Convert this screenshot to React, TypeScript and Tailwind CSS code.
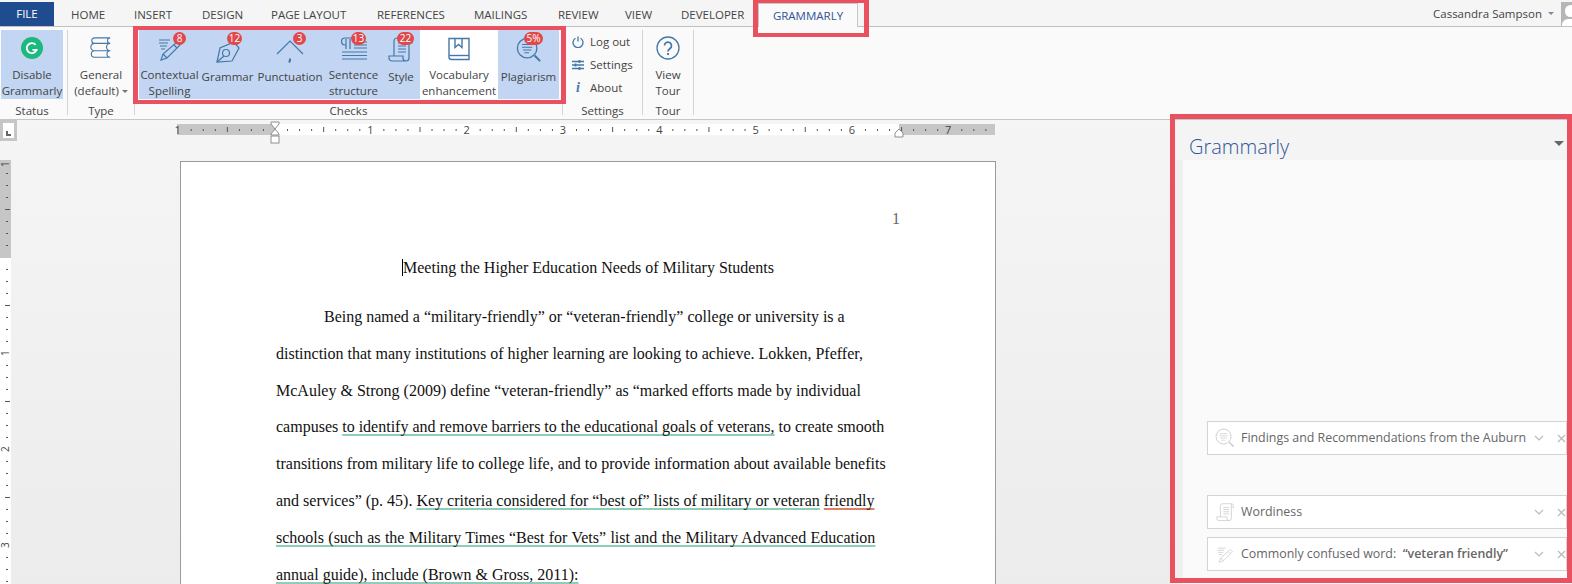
import type { ReactNode } from "react";

const tabs = [
  { label: "HOME", width: "w-[63px]" },
  { label: "INSERT", width: "w-[68px]" },
  { label: "DESIGN", width: "w-[69px]" },
  { label: "PAGE LAYOUT", width: "w-[106px]" },
  { label: "REFERENCES", width: "w-[97px]" },
  { label: "MAILINGS", width: "w-[84px]" },
  { label: "REVIEW", width: "w-[67px]" },
  { label: "VIEW", width: "w-[56px]" },
  { label: "DEVELOPER", width: "w-[77px]" },
];

const Blue = ({ children, w = 30, h = 28 }: { children: ReactNode; w?: number; h?: number }) => (
  <svg
    width={w}
    height={h}
    viewBox={`0 0 ${w} ${h}`}
    fill="none"
    stroke="#4478a8"
    strokeWidth="1.2"
  >
    {children}
  </svg>
);

const PencilIcon = ({ stroke = "#4478a8", size = 24 }: { stroke?: string; size?: number }) => (
  <svg width={size} height={size} viewBox="0 0 24 24" fill="none" stroke={stroke} strokeWidth="1.2">
    <path d="M1 3h11M1 6h9M2 9h7M3 12h4" />
    <path d="M19 5l3 3L9 21l-6 2 2-6z" />
    <path d="M5 17l4 4M16 8l3 3" />
  </svg>
);

const NibIcon = () => (
  <Blue w={28} h={24}>
    <path d="M3 23l3-14 14-6 5 6-7 13z" />
    <path d="M3 23l7-6" />
    <circle cx="12" cy="14" r="3.5" />
  </Blue>
);

const CaretIcon = () => (
  <Blue w={28} h={24}>
    <path d="M1 15L14 2l13 13" />
    <path d="M14 19.5v2l-1 2" strokeWidth="2" />
  </Blue>
);

const SentenceIcon = () => (
  <Blue w={28} h={24}>
    <path d="M6 2v10M10 2v10M12 1H5a3.5 3.5 0 0 0 0 7h1" />
    <path d="M14 5h13M14 8h13M14 11h13M2 15h25M2 18.500h25M2 22h25" />
  </Blue>
);

const ScrollIcon = ({ stroke = "#4478a8", size = 26 }: { stroke?: string; size?: number }) => (
  <svg width={size} height={size} viewBox="0 0 26 26" fill="none" stroke={stroke} strokeWidth="1.2">
    <path d="M21 1H9a3 3 0 0 0-3 3v15" />
    <path d="M21 1a3 3 0 0 1 3 3v2h-3M21 1v20a3 3 0 0 1-3 3H4a3 3 0 0 1-3-3v-2h14v2a3 3 0 0 0 3 3" />
    <path d="M10 6h8M10 9h8M10 12h8M10 15h8" />
  </svg>
);

const BookIcon = () => (
  <Blue w={24} h={24}>
    <path d="M2 1.5h20v21H4.500A2.500 2.500 0 0 1 2 20z" strokeWidth="1.4" />
    <path d="M2 18.500h20" strokeWidth="1.4" />
    <path d="M8 1.500v9l3.500-3 3.500 3v-9" strokeWidth="1.4" />
  </Blue>
);

const SearchIcon = ({ stroke = "#4478a8", size = 26 }: { stroke?: string; size?: number }) => (
  <svg width={size} height={size} viewBox="0 0 28 28" fill="none" stroke={stroke} strokeWidth="1.4">
    <circle cx="12" cy="12" r="10.500" />
    <path d="M6.500 8h11M6.500 11h11M7.500 14h9M9 17h5" strokeWidth="1.100" />
    <path d="M20 20l6 6" strokeWidth="2.200" />
  </svg>
);

const checks = [
  { top: "Contextual", bottom: "Spelling", width: "w-[61px]", icon: <PencilIcon />, badge: "8", badgeClass: "w-[13px] left-[34px]", on: true },
  { top: "Grammar", bottom: "", width: "w-[55px]", icon: <NibIcon />, badge: "12", badgeClass: "w-[15px] left-[27px]", on: true },
  { top: "Punctuation", bottom: "", width: "w-[70px]", icon: <CaretIcon />, badge: "3", badgeClass: "w-[13px] left-[38px]", on: true },
  { top: "Sentence", bottom: "structure", width: "w-[57px]", icon: <SentenceIcon />, badge: "13", badgeClass: "w-[15px] left-[26px]", on: true },
  { top: "Style", bottom: "", width: "w-[38px]", icon: <ScrollIcon />, badge: "22", badgeClass: "w-[17px] left-[15px]", on: true },
  { top: "Vocabulary", bottom: "enhancement", width: "w-[78px]", icon: <BookIcon />, badge: "", badgeClass: "", on: false },
  { top: "Plagiarism", bottom: "", width: "w-[61px]", icon: <SearchIcon />, badge: "5%", badgeClass: "w-[19px] left-[26px]", on: true },
];

function CheckButton({ check }: { check: (typeof checks)[number] }) {
  return (
    <div className={`${check.width} h-[69px] flex flex-col items-center ${check.on ? "bg-[#c2d5f2]" : "bg-white"}`}>
      <div className="relative w-full h-[37px] pb-[4px] flex items-end justify-center">
        {check.icon}
        {check.badge && (
          <span
            className={`absolute top-[2px] h-[13px] rounded-full bg-[#e0484a] text-white text-[10px] leading-[13px] text-center ${check.badgeClass}`}
          >
            {check.badge}
          </span>
        )}
      </div>
      <div className="mt-[2px] text-center whitespace-nowrap leading-[16px]">
        <div>{check.top}</div>
        <div>{check.bottom}</div>
      </div>
    </div>
  );
}

const GroupLabel = ({ children }: { children: ReactNode }) => (
  <div className="mt-[4px] h-[16px] leading-[16px] text-center">{children}</div>
);

const Sep = () => <div className="w-px h-[85px] bg-[#d4d4d4] shrink-0" />;

function Ribbon() {
  return (
    <div className="h-[93px] bg-[#fafafa] border-b border-[#c6c6c6] pt-[3px] flex text-[#444] shrink-0">
      <div className="w-[67px] pl-px pr-[4px]">
        <div className="h-[69px] bg-[#c2d5f2] flex flex-col items-center">
          <div className="h-[37px] pb-[6px] flex items-end justify-center">
            <svg width="22" height="22" viewBox="0 0 24 24">
              <circle cx="12" cy="12" r="12" fill="#1cb87e" />
              <path d="M16 8.500A5.500 5.500 0 1 0 17 14h-4.500" fill="none" stroke="#fff" strokeWidth="2" />
            </svg>
          </div>
          <div className="mt-[2px] text-center leading-[16px] whitespace-nowrap">
            <div>Disable</div>
            <div>Grammarly</div>
          </div>
        </div>
        <GroupLabel>Status</GroupLabel>
      </div>
      <Sep />
      <div className="w-[66px]">
        <div className="h-[69px] flex flex-col items-center">
          <div className="h-[37px] pb-[5px] flex items-end justify-center">
            <svg width="24" height="24" viewBox="0 0 24 26" fill="none" stroke="#4478a8" strokeWidth="1.2">
              <path d="M22 2H5a3 3 0 0 0 0 6h17a3 3 0 0 1 0-6M2 8h17M22 8H5a3 3 0 0 0 0 8h17M22 16a4 4 0 0 1 0-8M22 16H5a3 3 0 0 0 0 7h17a3 3 0 0 1 0-7" />
            </svg>
          </div>
          <div className="mt-[2px] text-center leading-[16px] whitespace-nowrap">
            <div>General</div>
            <div className="flex items-center">
              (default)
              <span className="ml-[3px] border-x-[3px] border-t-[3px] border-x-transparent border-t-[#777]" />
            </div>
          </div>
        </div>
        <GroupLabel>Type</GroupLabel>
      </div>
      <Sep />
      <div className="w-[427px]">
        <div className="flex pl-[4px]">
          {checks.map((check) => (
            <CheckButton key={check.top} check={check} />
          ))}
        </div>
        <GroupLabel>Checks</GroupLabel>
      </div>
      <Sep />
      <div className="w-[79px]">
        <div className="h-[69px] pl-[9px] pt-[1px] flex flex-col justify-center gap-[7px]">
          <div className="flex items-center h-[16px] leading-[16px]">
            <svg width="12" height="12" viewBox="0 0 12 12" fill="none" stroke="#4478a8" strokeWidth="1.300">
              <path d="M3.500 2.200a5 5 0 1 0 5 0M6 .5v5" />
            </svg>
            <span className="ml-[6px]">Log out</span>
          </div>
          <div className="flex items-center h-[16px] leading-[16px]">
            <svg width="12" height="12" viewBox="0 0 12 12" fill="none" stroke="#4478a8" strokeWidth="1.300">
              <path d="M0 2.500h12M0 6h12M0 9.500h12" />
              <path d="M7.500 1v3M3.500 4.500v3M7.500 8v3" strokeWidth="1.800" />
            </svg>
            <span className="ml-[6px]">Settings</span>
          </div>
          <div className="flex items-center h-[16px] leading-[16px]">
            <span className="w-[12px] text-center font-['Liberation_Serif',serif] italic font-bold text-[#4478a8] text-[14px]">i</span>
            <span className="ml-[6px]">About</span>
          </div>
        </div>
        <GroupLabel>Settings</GroupLabel>
      </div>
      <Sep />
      <div className="w-[50px]">
        <div className="h-[69px] flex flex-col items-center">
          <div className="h-[37px] pb-[5px] flex items-end justify-center">
            <svg width="24" height="24" viewBox="0 0 24 24" fill="none" stroke="#4478a8" strokeWidth="1.300">
              <circle cx="12" cy="12" r="11" />
              <path d="M8.500 9.500a3.500 3.500 0 1 1 5.500 3c-1.400 1-2 1.500-2 3" strokeWidth="1.700" />
              <path d="M12 17v2" strokeWidth="1.900" />
            </svg>
          </div>
          <div className="mt-[2px] text-center leading-[16px]">
            <div>View</div>
            <div>Tour</div>
          </div>
        </div>
        <GroupLabel>Tour</GroupLabel>
      </div>
      <Sep />
    </div>
  );
}

function HorizontalRuler() {
  const ticks = [];
  for (let i = -8; i <= 59; i++) {
    const x = 98 + i * 12.04;
    if (i % 8 === 0) {
      const n = Math.abs(i / 8);
      if (n > 0) {
        ticks.push(
          <text key={i} x={x - 1} y="10" fontSize="11" textAnchor="middle" fill="#444" fontFamily="Open Sans">
            {n}
          </text>,
        );
      }
    } else if (i % 4 === 0) {
      ticks.push(<rect key={i} x={x} y="3" width="1" height="5" fill="#555" />);
    } else {
      ticks.push(<rect key={i} x={x} y="5" width="1" height="2" fill="#555" />);
    }
  }
  return (
    <svg width="818" height="24" viewBox="0 0 818 24" className="shrink-0 overflow-visible">
      <rect x="0" y="0" width="818" height="11" fill="#fff" />
      <rect x="0" y="0" width="98" height="11" fill="#c6c6c6" />
      <rect x="722" y="0" width="96" height="11" fill="#c6c6c6" />
      {ticks}
      <path d="M94 -2h8v2l-4 5-4-5z M98 5l4 5v1h-8v-1z" fill="#fff" stroke="#8e8e8e" />
      <rect x="94" y="12" width="8" height="7" fill="#fff" stroke="#8e8e8e" />
      <path d="M722 5l4 4v4h-8v-4z" fill="#fff" stroke="#8e8e8e" />
    </svg>
  );
}

function VerticalRuler() {
  const ticks = [];
  for (let i = 0; i <= 36; i++) {
    const y = 1 + i * 12;
    if (i % 8 === 0) {
      ticks.push(
        <text key={i} x="0" y="0" transform={`translate(9 ${i === 0 ? 7 : y + 3}) rotate(-90)`} fontSize="10" fill="#444" fontFamily="Open Sans">
          {i === 0 ? 1 : i / 8 - 1 === 0 ? "" : i / 8 - 1}
        </text>,
      );
    } else if (i % 4 === 0) {
      ticks.push(<rect key={i} x="5" y={y} width="5" height="1" fill="#555" />);
    } else {
      ticks.push(<rect key={i} x="6" y={y} width="2" height="1" fill="#555" />);
    }
  }
  return (
    <svg width="12" height="425" viewBox="0 0 12 425" className="shrink-0">
      <rect x="0" y="0" width="11" height="425" fill="#fff" />
      <rect x="0" y="0" width="11" height="98" fill="#c6c6c6" />
      {ticks}
    </svg>
  );
}

const Teal = ({ children }: { children: ReactNode }) => (
  <span className="underline decoration-[#8fcdbb] decoration-2 underline-offset-[2px] [text-decoration-skip-ink:none]">{children}</span>
);

const Rust = ({ children }: { children: ReactNode }) => (
  <span className="underline decoration-[#df7f68] decoration-2 underline-offset-[2px] [text-decoration-skip-ink:none]">{children}</span>
);

const DocLine = ({ children, className = "" }: { children: ReactNode; className?: string }) => (
  <div className={`h-[36.860px] leading-[36.860px] whitespace-nowrap ${className}`}>{children}</div>
);

function Page() {
  return (
    <div className="w-[816px] h-[424px] bg-white border border-[#9b9b9b] border-b-0 pl-[95px] pt-[39px] font-['Liberation_Serif',serif] text-[16px] text-[#111] shrink-0">
      <div className="h-[30px] leading-[36px] pl-[616px] text-[#666]">1</div>
      <DocLine className="pl-[126px] mt-[19px]">
        <span className="border-l border-black">Meeting the Higher Education Needs of Military Students</span>
      </DocLine>
      <DocLine className="pl-[48px] mt-[12px]">
        Being named a “military-friendly” or “veteran-friendly” college or university is a
      </DocLine>
      <DocLine>distinction that many institutions of higher learning are looking to achieve. Lokken, Pfeffer,</DocLine>
      <DocLine>McAuley &amp; Strong (2009) define “veteran-friendly” as “marked efforts made by individual</DocLine>
      <DocLine>
        campuses <Teal>to identify and remove barriers to the educational goals of veterans,</Teal> to create smooth
      </DocLine>
      <DocLine>transitions from military life to college life, and to provide information about available benefits</DocLine>
      <DocLine>
        and services” (p. 45). <Teal>Key criteria considered for “best of” lists of military or veteran</Teal>{" "}
        <Rust>friendly</Rust>
      </DocLine>
      <DocLine className="[word-spacing:0.300px]">
        <Teal>schools (such as the Military Times “Best for Vets” list and the Military Advanced Education</Teal>
      </DocLine>
      <DocLine>
        <Teal>annual guide), include (Brown &amp; Gross, 2011):</Teal>
      </DocLine>
    </div>
  );
}

function Finding({ icon, children, className = "" }: { icon: ReactNode; children: ReactNode; className?: string }) {
  return (
    <div className={`h-[34px] ml-[24px] w-[360px] bg-white border border-[#d4d4d4] flex items-center text-[#666] text-[12.400px] ${className}`}>
      <div className="w-[33px] flex justify-center pl-px shrink-0">{icon}</div>
      <div className="w-[293px] whitespace-nowrap overflow-hidden">{children}</div>
      <svg width="10" height="6" viewBox="0 0 10 6" fill="none" stroke="#bbb" strokeWidth="1.200" className="shrink-0">
        <path d="M1 1l4 4 4-4" />
      </svg>
      <svg width="9" height="9" viewBox="0 0 9 9" fill="none" stroke="#bbb" strokeWidth="1.300" className="shrink-0 ml-[13px]">
        <path d="M1 1l7 7M8 1L1 8" />
      </svg>
    </div>
  );
}

function SidePane() {
  return (
    <div className="w-[396px] h-[464px] ml-[6px] bg-[#f0f0f0] shrink-0 overflow-hidden">
      <div className="h-[40px] bg-[#f4f4f4] pl-[13px] pr-[8px] flex items-center justify-between">
        <span className="text-[20px] font-light leading-[26px] mt-[13px] text-[#2f5597]">Grammarly</span>
        <span className="mt-[6px] border-x-[5px] border-t-[5px] border-x-transparent border-t-[#666]" />
      </div>
      <div className="h-[424px] ml-[7px] bg-[#fafafa] pt-[261px]">
        <Finding icon={<SearchIcon stroke="#d0d0d0" size={20} />}>Findings and Recommendations from the Auburn</Finding>
        <Finding icon={<ScrollIcon stroke="#d0d0d0" size={19} />} className="mt-[40px]">Wordiness</Finding>
        <Finding icon={<PencilIcon stroke="#d0d0d0" size={17} />} className="mt-[8px]">
          Commonly confused word:&nbsp; <span className="font-semibold">“veteran friendly”</span>
        </Finding>
      </div>
    </div>
  );
}

export default function App() {
  return (
    <div className="relative w-[1572px] h-[584px] overflow-hidden flex flex-col bg-[#f3f3f3] font-['Open_Sans',sans-serif] text-[11.500px]">
      <div className="h-[27px] bg-[#f5f5f5] border-b border-[#c0c0c0] flex text-[#444] shrink-0">
        <div className="w-[54px] h-[24px] mt-[2px] bg-[#1f4c8f] text-white flex items-center justify-center">FILE</div>
        <div className="w-[17px]" />
        {tabs.map((tab) => (
          <div key={tab.label} className={`${tab.width} h-[26px] leading-[30px] whitespace-nowrap`}>
            {tab.label}
          </div>
        ))}
        <div className="w-[100px] h-[24px] mt-[3px] bg-[#fafafa] border-x border-t border-[#c8c8c8] text-[#2f5597] flex items-center justify-center">
          GRAMMARLY
        </div>
        <div className="ml-auto flex">
          <span className="leading-[28px]">Cassandra Sampson</span>
          <span className="ml-[6px] mt-[12px] h-0 border-x-[3px] border-t-[3px] border-x-transparent border-t-[#888]" />
          <div className="relative ml-[7px] mt-[2px] w-[11px] h-[24px] bg-[#b6b6b6] overflow-hidden">
            <div className="absolute left-[4px] top-[3px] w-[11px] h-[12px] rounded-full bg-white" />
            <div className="absolute left-[1px] top-[17px] w-[16px] h-[12px] rounded-full bg-white" />
          </div>
        </div>
      </div>
      <Ribbon />
      <div className="flex flex-1 min-h-0">
        <div className="w-[1170px] shrink-0 bg-gradient-to-b from-[#f5f5f5] to-[#ececec]">
          <div className="h-[40px] flex pt-[4px] relative">
            <div className="w-[17px] h-[21px] -mt-[4px] border-[3px] border-[#c6c6c6] bg-white flex items-end justify-center pb-[2px] shrink-0">
              <div className="w-[5px] h-[5px] border-l-2 border-b-2 border-[#666]" />
            </div>
            <div className="ml-[160px]">
              <HorizontalRuler />
            </div>
          </div>
          <div className="flex">
            <VerticalRuler />
            <div className="ml-[168px] pt-px">
              <Page />
            </div>
          </div>
        </div>
        <SidePane />
      </div>

      {/* red callouts drawn over the screenshot */}
      <div className="absolute left-[133px] top-[26px] w-[433px] h-[78px] border-x-[5px] border-y-[4px] border-[#ea5160]" />
      <div className="absolute left-[753px] top-0 w-[116px] h-[37px] border-x-[5px] border-t-[3px] border-b-[4px] border-[#ea5160]" />
      <div className="absolute left-[1170px] top-[114px] w-[402px] h-[469px] border-[5px] border-[#ea5160]" />
    </div>
  );
}
